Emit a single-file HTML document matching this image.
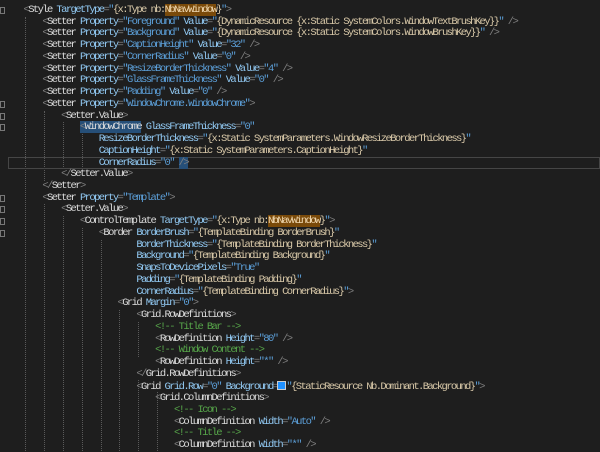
<!DOCTYPE html>
<html><head><meta charset="utf-8"><style>
body{margin:0;width:600px;height:451px;background:#1e1e1e;overflow:hidden;position:relative}
#code{position:absolute;left:23.5px;top:5px;font-family:"Liberation Mono",monospace;font-size:10.5px;letter-spacing:-1.6px;line-height:11.73px;white-space:pre;color:#d4d4d4}
.b{color:#808080}.e{color:#dcdcdc}.a{color:#92caf4}.v{color:#5c9fd8}.m{color:#d8c8a8}.c{color:#57a64a}
.hl{background:#7a4a0a;color:#f0d8b0}.sel{background:#264f78}
.g{position:absolute;width:0;border-left:1px dotted #5a5a5a}
.f{position:absolute;left:0;width:5px;height:7px;border:1px solid #777;box-sizing:border-box}
.sw{display:inline-block;width:7px;height:7px;background:#1e90ff;border:1px solid #ccc;vertical-align:-1px}
</style></head><body>
<div class="g" style="left:25px;top:17px;height:434px"></div>
<div class="g" style="left:44px;top:111px;height:70px"></div>
<div class="g" style="left:44px;top:204px;height:247px"></div>
<div class="g" style="left:63px;top:122px;height:47px"></div>
<div class="g" style="left:63px;top:216px;height:235px"></div>
<div class="g" style="left:82px;top:134px;height:35px"></div>
<div class="g" style="left:82px;top:228px;height:223px"></div>
<div class="g" style="left:101px;top:240px;height:211px"></div>
<div class="g" style="left:119px;top:310px;height:141px"></div>
<div class="g" style="left:138px;top:322px;height:35px"></div>
<div class="g" style="left:138px;top:380px;height:71px"></div>
<div class="g" style="left:157px;top:392px;height:59px"></div>
<div style="position:absolute;left:8px;right:0;top:157px;height:12px;border:1px solid #464646;box-sizing:border-box"></div>
<div class="f" style="top:7px"></div><div class="f" style="top:101px"></div><div class="f" style="top:113px"></div><div class="f" style="top:124px"></div>
<div class="f" style="top:195px"></div><div class="f" style="top:206px"></div><div class="f" style="top:218px"></div><div class="f" style="top:230px"></div>
<div id="code"><span class="b">&lt;</span><span class="e">Style</span> <span class="a">TargetType</span><span class="b">=</span><span class="v">"</span><span class="m">{x:Type nb:<span class="hl">NbNavWindow</span>}</span><span class="v">"</span><span class="b">&gt;</span>
    <span class="b">&lt;</span><span class="e">Setter</span> <span class="a">Property</span><span class="b">=</span><span class="v">"Foreground"</span> <span class="a">Value</span><span class="b">=</span><span class="v">"</span><span class="m">{DynamicResource {x:Static SystemColors.WindowTextBrushKey}}</span><span class="v">"</span> <span class="b">/&gt;</span>
    <span class="b">&lt;</span><span class="e">Setter</span> <span class="a">Property</span><span class="b">=</span><span class="v">"Background"</span> <span class="a">Value</span><span class="b">=</span><span class="v">"</span><span class="m">{DynamicResource {x:Static SystemColors.WindowBrushKey}}</span><span class="v">"</span> <span class="b">/&gt;</span>
    <span class="b">&lt;</span><span class="e">Setter</span> <span class="a">Property</span><span class="b">=</span><span class="v">"CaptionHeight"</span> <span class="a">Value</span><span class="b">=</span><span class="v">"32"</span> <span class="b">/&gt;</span>
    <span class="b">&lt;</span><span class="e">Setter</span> <span class="a">Property</span><span class="b">=</span><span class="v">"CornerRadius"</span> <span class="a">Value</span><span class="b">=</span><span class="v">"0"</span> <span class="b">/&gt;</span>
    <span class="b">&lt;</span><span class="e">Setter</span> <span class="a">Property</span><span class="b">=</span><span class="v">"ResizeBorderThickness"</span> <span class="a">Value</span><span class="b">=</span><span class="v">"4"</span> <span class="b">/&gt;</span>
    <span class="b">&lt;</span><span class="e">Setter</span> <span class="a">Property</span><span class="b">=</span><span class="v">"GlassFrameThickness"</span> <span class="a">Value</span><span class="b">=</span><span class="v">"0"</span> <span class="b">/&gt;</span>
    <span class="b">&lt;</span><span class="e">Setter</span> <span class="a">Property</span><span class="b">=</span><span class="v">"Padding"</span> <span class="a">Value</span><span class="b">=</span><span class="v">"0"</span> <span class="b">/&gt;</span>
    <span class="b">&lt;</span><span class="e">Setter</span> <span class="a">Property</span><span class="b">=</span><span class="v">"WindowChrome.WindowChrome"</span><span class="b">&gt;</span>
        <span class="b">&lt;</span><span class="e">Setter.Value</span><span class="b">&gt;</span>
            <span class="sel"><span class="b">&lt;</span><span class="e">WindowChrome</span></span> <span class="a">GlassFrameThickness</span><span class="b">=</span><span class="v">"0"</span>
                <span class="a">ResizeBorderThickness</span><span class="b">=</span><span class="v">"</span><span class="m">{x:Static SystemParameters.WindowResizeBorderThickness}</span><span class="v">"</span>
                <span class="a">CaptionHeight</span><span class="b">=</span><span class="v">"</span><span class="m">{x:Static SystemParameters.CaptionHeight}</span><span class="v">"</span>
                <span class="a">CornerRadius</span><span class="b">=</span><span class="v">"0"</span> <span class="sel"><span class="b">/&gt;</span></span>
        <span class="b">&lt;/</span><span class="e">Setter.Value</span><span class="b">&gt;</span>
    <span class="b">&lt;/</span><span class="e">Setter</span><span class="b">&gt;</span>
    <span class="b">&lt;</span><span class="e">Setter</span> <span class="a">Property</span><span class="b">=</span><span class="v">"Template"</span><span class="b">&gt;</span>
        <span class="b">&lt;</span><span class="e">Setter.Value</span><span class="b">&gt;</span>
            <span class="b">&lt;</span><span class="e">ControlTemplate</span> <span class="a">TargetType</span><span class="b">=</span><span class="v">"</span><span class="m">{x:Type nb:<span class="hl">NbNavWindow</span>}</span><span class="v">"</span><span class="b">&gt;</span>
                <span class="b">&lt;</span><span class="e">Border</span> <span class="a">BorderBrush</span><span class="b">=</span><span class="v">"</span><span class="m">{TemplateBinding BorderBrush}</span><span class="v">"</span>
                        <span class="a">BorderThickness</span><span class="b">=</span><span class="v">"</span><span class="m">{TemplateBinding BorderThickness}</span><span class="v">"</span>
                        <span class="a">Background</span><span class="b">=</span><span class="v">"</span><span class="m">{TemplateBinding Background}</span><span class="v">"</span>
                        <span class="a">SnapsToDevicePixels</span><span class="b">=</span><span class="v">"True"</span>
                        <span class="a">Padding</span><span class="b">=</span><span class="v">"</span><span class="m">{TemplateBinding Padding}</span><span class="v">"</span>
                        <span class="a">CornerRadius</span><span class="b">=</span><span class="v">"</span><span class="m">{TemplateBinding CornerRadius}</span><span class="v">"</span><span class="b">&gt;</span>
                    <span class="b">&lt;</span><span class="e">Grid</span> <span class="a">Margin</span><span class="b">=</span><span class="v">"0"</span><span class="b">&gt;</span>
                        <span class="b">&lt;</span><span class="e">Grid.RowDefinitions</span><span class="b">&gt;</span>
                            <span class="c">&lt;!-- Title Bar --&gt;</span>
                            <span class="b">&lt;</span><span class="e">RowDefinition</span> <span class="a">Height</span><span class="b">=</span><span class="v">"80"</span> <span class="b">/&gt;</span>
                            <span class="c">&lt;!-- Window Content --&gt;</span>
                            <span class="b">&lt;</span><span class="e">RowDefinition</span> <span class="a">Height</span><span class="b">=</span><span class="v">"*"</span> <span class="b">/&gt;</span>
                        <span class="b">&lt;/</span><span class="e">Grid.RowDefinitions</span><span class="b">&gt;</span>
                        <span class="b">&lt;</span><span class="e">Grid</span> <span class="a">Grid.Row</span><span class="b">=</span><span class="v">"0"</span> <span class="a">Background</span><span class="b">=</span><span class="sw"></span><span class="v">"</span><span class="m">{StaticResource Nb.Dominant.Background}</span><span class="v">"</span><span class="b">&gt;</span>
                            <span class="b">&lt;</span><span class="e">Grid.ColumnDefinitions</span><span class="b">&gt;</span>
                                <span class="c">&lt;!-- Icon --&gt;</span>
                                <span class="b">&lt;</span><span class="e">ColumnDefinition</span> <span class="a">Width</span><span class="b">=</span><span class="v">"Auto"</span> <span class="b">/&gt;</span>
                                <span class="c">&lt;!-- Title --&gt;</span>
                                <span class="b">&lt;</span><span class="e">ColumnDefinition</span> <span class="a">Width</span><span class="b">=</span><span class="v">"*"</span> <span class="b">/&gt;</span>
</div>
</body></html>
